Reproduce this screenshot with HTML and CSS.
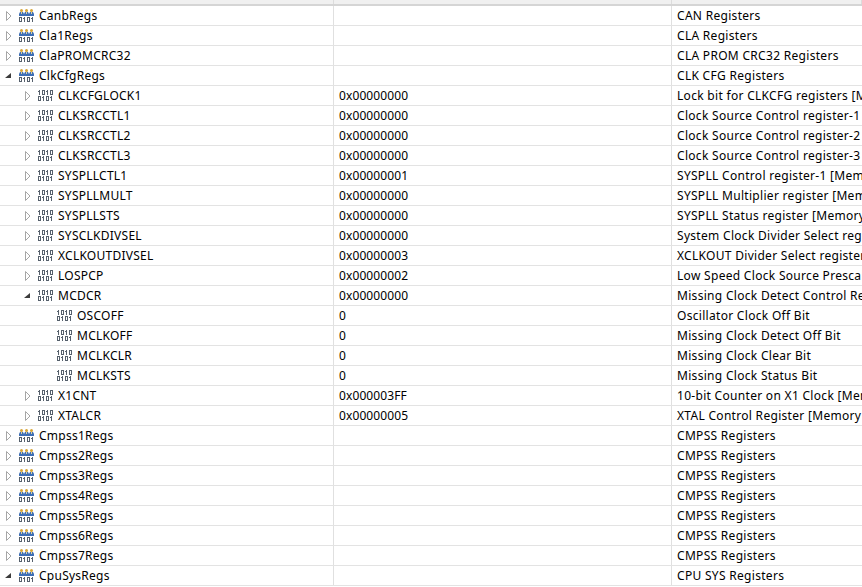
FILE: index.html
```html
<!DOCTYPE html>
<html lang="en">
<head>
    <meta charset="UTF-8">
    <title>Registers</title>
    <link rel="stylesheet" href="styles.css">
</head>
<body>
    <!-- icon sheet -->
    <svg class="sprites" width="0" height="0">
        <defs>
            <g id="bits-top" fill="none" stroke="#56606c" stroke-width="1">
                <path d="M1.5 0v5M0 1.5h1"/><rect x="4.5" y="0.5" width="2" height="4"/>
                <path d="M9.5 0v5M8 1.5h1"/><rect x="12.5" y="0.5" width="2" height="4"/>
            </g>
            <g id="bits-bottom" fill="none" stroke="#56606c" stroke-width="1">
                <rect x="0.5" y="0.5" width="2" height="4"/><path d="M5.5 0v5M4 1.5h1"/>
                <rect x="8.5" y="0.5" width="2" height="4"/><path d="M13.5 0v5M12 1.5h1"/>
            </g>
            <g id="person">
                <circle cx="2.5" cy="1.5" r="1.5" fill="#d6a436"/>
                <path d="M0 7V5l1-2h3l1 2v2z" fill="#3f6fb5"/>
                <path d="M2 3h1v2h-1z" fill="#d8cfa0"/>
            </g>
            <symbol id="ico-reg" viewBox="0 0 16 15">
                <use href="#bits-top" x="0" y="2"/>
                <use href="#bits-bottom" x="0" y="8"/>
            </symbol>
            <symbol id="ico-group" viewBox="0 0 16 15">
                <use href="#person" x="0" y="1"/>
                <use href="#person" x="5" y="1"/>
                <use href="#person" x="10" y="1"/>
                <use href="#bits-bottom" x="0" y="9"/>
            </symbol>
            <symbol id="tw-closed" viewBox="0 0 8 11">
                <path d="M2.5 1.5v9l4.5-4.5z" fill="#fff" stroke="#a6a6a6"/>
            </symbol>
            <symbol id="tw-open" viewBox="0 0 8 11">
                <path d="M7 3v5H1z" fill="#3c3c3c"/>
            </symbol>
        </defs>
    </svg>

    <div class="tree">
        <div class="header"><span class="col-name"></span><span class="col-value"></span><span class="col-desc"></span></div>

        <div class="row">
            <div class="col-name"><svg class="twist"><use href="#tw-closed"/></svg><svg class="ico"><use href="#ico-group"/></svg>CanbRegs</div>
            <div class="col-value"></div>
            <div class="col-desc">CAN Registers</div>
        </div>
        <div class="row">
            <div class="col-name"><svg class="twist"><use href="#tw-closed"/></svg><svg class="ico"><use href="#ico-group"/></svg>Cla1Regs</div>
            <div class="col-value"></div>
            <div class="col-desc">CLA Registers</div>
        </div>
        <div class="row">
            <div class="col-name"><svg class="twist"><use href="#tw-closed"/></svg><svg class="ico"><use href="#ico-group"/></svg>ClaPROMCRC32</div>
            <div class="col-value"></div>
            <div class="col-desc">CLA PROM CRC32 Registers</div>
        </div>
        <div class="row">
            <div class="col-name"><svg class="twist"><use href="#tw-open"/></svg><svg class="ico"><use href="#ico-group"/></svg>ClkCfgRegs</div>
            <div class="col-value"></div>
            <div class="col-desc">CLK CFG Registers</div>
        </div>

        <div class="row level1">
            <div class="col-name"><svg class="twist"><use href="#tw-closed"/></svg><svg class="ico"><use href="#ico-reg"/></svg>CLKCFGLOCK1</div>
            <div class="col-value">0x00000000</div>
            <div class="col-desc">Lock bit for CLKCFG registers [Memory Map]</div>
        </div>
        <div class="row level1">
            <div class="col-name"><svg class="twist"><use href="#tw-closed"/></svg><svg class="ico"><use href="#ico-reg"/></svg>CLKSRCCTL1</div>
            <div class="col-value">0x00000000</div>
            <div class="col-desc">Clock Source Control register-1 [Memory Map]</div>
        </div>
        <div class="row level1">
            <div class="col-name"><svg class="twist"><use href="#tw-closed"/></svg><svg class="ico"><use href="#ico-reg"/></svg>CLKSRCCTL2</div>
            <div class="col-value">0x00000000</div>
            <div class="col-desc">Clock Source Control register-2 [Memory Map]</div>
        </div>
        <div class="row level1">
            <div class="col-name"><svg class="twist"><use href="#tw-closed"/></svg><svg class="ico"><use href="#ico-reg"/></svg>CLKSRCCTL3</div>
            <div class="col-value">0x00000000</div>
            <div class="col-desc">Clock Source Control register-3 [Memory Map]</div>
        </div>
        <div class="row level1">
            <div class="col-name"><svg class="twist"><use href="#tw-closed"/></svg><svg class="ico"><use href="#ico-reg"/></svg>SYSPLLCTL1</div>
            <div class="col-value">0x00000001</div>
            <div class="col-desc">SYSPLL Control register-1 [Memory Map]</div>
        </div>
        <div class="row level1">
            <div class="col-name"><svg class="twist"><use href="#tw-closed"/></svg><svg class="ico"><use href="#ico-reg"/></svg>SYSPLLMULT</div>
            <div class="col-value">0x00000000</div>
            <div class="col-desc">SYSPLL Multiplier register [Memory Map]</div>
        </div>
        <div class="row level1">
            <div class="col-name"><svg class="twist"><use href="#tw-closed"/></svg><svg class="ico"><use href="#ico-reg"/></svg>SYSPLLSTS</div>
            <div class="col-value">0x00000000</div>
            <div class="col-desc">SYSPLL Status register [Memory Map]</div>
        </div>
        <div class="row level1">
            <div class="col-name"><svg class="twist"><use href="#tw-closed"/></svg><svg class="ico"><use href="#ico-reg"/></svg>SYSCLKDIVSEL</div>
            <div class="col-value">0x00000000</div>
            <div class="col-desc">System Clock Divider Select register [Memory Map]</div>
        </div>
        <div class="row level1">
            <div class="col-name"><svg class="twist"><use href="#tw-closed"/></svg><svg class="ico"><use href="#ico-reg"/></svg>XCLKOUTDIVSEL</div>
            <div class="col-value">0x00000003</div>
            <div class="col-desc">XCLKOUT Divider Select register [Memory Map]</div>
        </div>
        <div class="row level1">
            <div class="col-name"><svg class="twist"><use href="#tw-closed"/></svg><svg class="ico"><use href="#ico-reg"/></svg>LOSPCP</div>
            <div class="col-value">0x00000002</div>
            <div class="col-desc">Low Speed Clock Source Prescaler [Memory Map]</div>
        </div>
        <div class="row level1">
            <div class="col-name"><svg class="twist"><use href="#tw-open"/></svg><svg class="ico"><use href="#ico-reg"/></svg>MCDCR</div>
            <div class="col-value">0x00000000</div>
            <div class="col-desc">Missing Clock Detect Control Register [Memory Map]</div>
        </div>

        <div class="row level2">
            <div class="col-name"><span class="twist"></span><svg class="ico"><use href="#ico-reg"/></svg>OSCOFF</div>
            <div class="col-value">0</div>
            <div class="col-desc">Oscillator Clock Off Bit</div>
        </div>
        <div class="row level2">
            <div class="col-name"><span class="twist"></span><svg class="ico"><use href="#ico-reg"/></svg>MCLKOFF</div>
            <div class="col-value">0</div>
            <div class="col-desc">Missing Clock Detect Off Bit</div>
        </div>
        <div class="row level2">
            <div class="col-name"><span class="twist"></span><svg class="ico"><use href="#ico-reg"/></svg>MCLKCLR</div>
            <div class="col-value">0</div>
            <div class="col-desc">Missing Clock Clear Bit</div>
        </div>
        <div class="row level2">
            <div class="col-name"><span class="twist"></span><svg class="ico"><use href="#ico-reg"/></svg>MCLKSTS</div>
            <div class="col-value">0</div>
            <div class="col-desc">Missing Clock Status Bit</div>
        </div>

        <div class="row level1">
            <div class="col-name"><svg class="twist"><use href="#tw-closed"/></svg><svg class="ico"><use href="#ico-reg"/></svg>X1CNT</div>
            <div class="col-value">0x000003FF</div>
            <div class="col-desc">10-bit Counter on X1 Clock [Memory Map]</div>
        </div>
        <div class="row level1">
            <div class="col-name"><svg class="twist"><use href="#tw-closed"/></svg><svg class="ico"><use href="#ico-reg"/></svg>XTALCR</div>
            <div class="col-value">0x00000005</div>
            <div class="col-desc">XTAL Control Register [Memory Map]</div>
        </div>

        <div class="row">
            <div class="col-name"><svg class="twist"><use href="#tw-closed"/></svg><svg class="ico"><use href="#ico-group"/></svg>Cmpss1Regs</div>
            <div class="col-value"></div>
            <div class="col-desc">CMPSS Registers</div>
        </div>
        <div class="row">
            <div class="col-name"><svg class="twist"><use href="#tw-closed"/></svg><svg class="ico"><use href="#ico-group"/></svg>Cmpss2Regs</div>
            <div class="col-value"></div>
            <div class="col-desc">CMPSS Registers</div>
        </div>
        <div class="row">
            <div class="col-name"><svg class="twist"><use href="#tw-closed"/></svg><svg class="ico"><use href="#ico-group"/></svg>Cmpss3Regs</div>
            <div class="col-value"></div>
            <div class="col-desc">CMPSS Registers</div>
        </div>
        <div class="row">
            <div class="col-name"><svg class="twist"><use href="#tw-closed"/></svg><svg class="ico"><use href="#ico-group"/></svg>Cmpss4Regs</div>
            <div class="col-value"></div>
            <div class="col-desc">CMPSS Registers</div>
        </div>
        <div class="row">
            <div class="col-name"><svg class="twist"><use href="#tw-closed"/></svg><svg class="ico"><use href="#ico-group"/></svg>Cmpss5Regs</div>
            <div class="col-value"></div>
            <div class="col-desc">CMPSS Registers</div>
        </div>
        <div class="row">
            <div class="col-name"><svg class="twist"><use href="#tw-closed"/></svg><svg class="ico"><use href="#ico-group"/></svg>Cmpss6Regs</div>
            <div class="col-value"></div>
            <div class="col-desc">CMPSS Registers</div>
        </div>
        <div class="row">
            <div class="col-name"><svg class="twist"><use href="#tw-closed"/></svg><svg class="ico"><use href="#ico-group"/></svg>Cmpss7Regs</div>
            <div class="col-value"></div>
            <div class="col-desc">CMPSS Registers</div>
        </div>
        <div class="row">
            <div class="col-name"><svg class="twist"><use href="#tw-open"/></svg><svg class="ico"><use href="#ico-group"/></svg>CpuSysRegs</div>
            <div class="col-value"></div>
            <div class="col-desc">CPU SYS Registers</div>
        </div>
    </div>
</body>
</html>
```

FILE: styles.css
```css
html, body {
    margin: 0;
    height: 100%;
    overflow: hidden;
    background-color: white;
}
.sprites {
    display: block;
    height: 0;
}
.tree {
    width: 862px;
    font-family: "Noto Sans", "Open Sans", sans-serif;
    font-size: 12px;
    color: #000;
}
.header {
    display: flex;
    height: 4px;
    background-color: #f0f0f0;
    border-bottom: 2px solid #d5d5d5;
}
.header span {
    box-sizing: border-box;
    border-right: 1px solid #dcdcdc;
}
.row {
    display: flex;
    height: 20px;
    box-sizing: border-box;
    border-bottom: 1px solid #e3e3e3;
    line-height: 19px;
    white-space: nowrap;
}
.col-name, .col-value, .col-desc {
    box-sizing: border-box;
    overflow: hidden;
    flex: none;
}
.col-name {
    width: 334px;
    display: flex;
    align-items: center;
    padding-left: 4px;
    border-right: 1px solid #e0e0e0;
    letter-spacing: 0.25px;
}
.col-value {
    width: 338px;
    padding-left: 5px;
    border-right: 1px solid #e0e0e0;
    letter-spacing: 0.1px;
}
.col-desc {
    width: 190px;
    padding-left: 5px;
    letter-spacing: 0.3px;
}
.row.level1 .col-name {
    padding-left: 23px;
}
.row.level2 .col-name {
    padding-left: 42px;
}
.twist {
    flex: none;
    width: 8px;
    height: 11px;
    margin-right: 7px;
}
.ico {
    flex: none;
    width: 16px;
    height: 15px;
    margin-right: 4px;
}
```
